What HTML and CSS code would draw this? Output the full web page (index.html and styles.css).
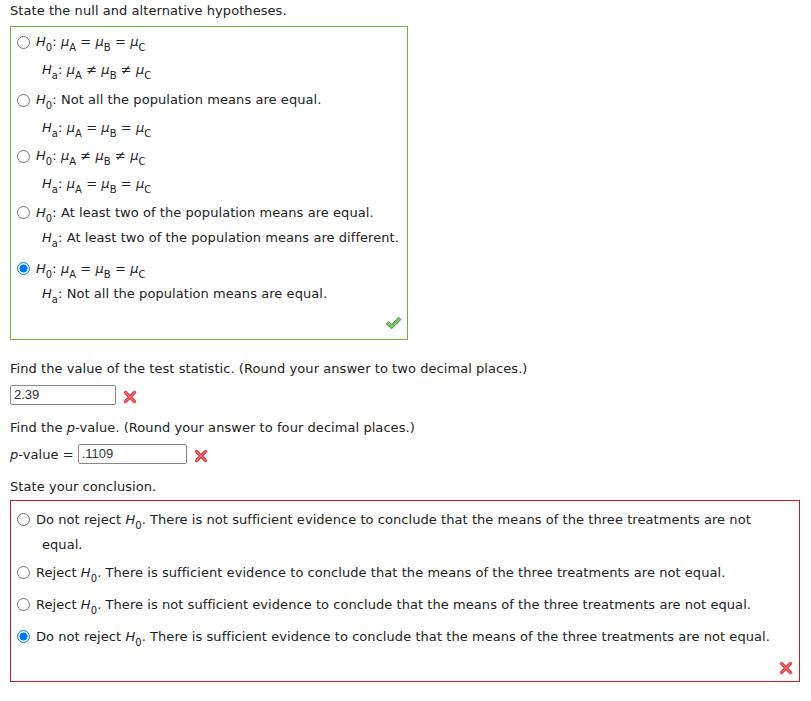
FILE: index.html
```html
<!DOCTYPE html>
<html lang="en">
<head>
<meta charset="utf-8">
<title>Hypotheses</title>
<link rel="stylesheet" href="styles.css">
</head>
<body>
<p class="prompt title">State the null and alternative hypotheses.</p>
<div class="answer-box correct">
  <label class="opt g1 first">
    <input type="radio" name="hyp">
    <span class="lines">
      <span class="line"><i>H</i><sub>0</sub>: <i class="mu">μ</i><sub>A</sub> = <i class="mu">μ</i><sub>B</sub> = <i class="mu">μ</i><sub>C</sub></span>
      <span class="line ha"><i>H</i><sub>a</sub>: <i class="mu">μ</i><sub>A</sub> ≠ <i class="mu">μ</i><sub>B</sub> ≠ <i class="mu">μ</i><sub>C</sub></span>
    </span>
  </label>
  <label class="opt g1">
    <input type="radio" name="hyp">
    <span class="lines">
      <span class="line"><i>H</i><sub>0</sub>: Not all the population means are equal.</span>
      <span class="line ha"><i>H</i><sub>a</sub>: <i class="mu">μ</i><sub>A</sub> = <i class="mu">μ</i><sub>B</sub> = <i class="mu">μ</i><sub>C</sub></span>
    </span>
  </label>
  <label class="opt g1">
    <input type="radio" name="hyp">
    <span class="lines">
      <span class="line"><i>H</i><sub>0</sub>: <i class="mu">μ</i><sub>A</sub> ≠ <i class="mu">μ</i><sub>B</sub> ≠ <i class="mu">μ</i><sub>C</sub></span>
      <span class="line ha"><i>H</i><sub>a</sub>: <i class="mu">μ</i><sub>A</sub> = <i class="mu">μ</i><sub>B</sub> = <i class="mu">μ</i><sub>C</sub></span>
    </span>
  </label>
  <label class="opt g2">
    <input type="radio" name="hyp">
    <span class="lines">
      <span class="line"><i>H</i><sub>0</sub>: At least two of the population means are equal.</span>
      <span class="line ha"><i>H</i><sub>a</sub>: At least two of the population means are different.</span>
    </span>
  </label>
  <label class="opt g3">
    <input type="radio" name="hyp" checked>
    <span class="lines">
      <span class="line"><i>H</i><sub>0</sub>: <i class="mu">μ</i><sub>A</sub> = <i class="mu">μ</i><sub>B</sub> = <i class="mu">μ</i><sub>C</sub></span>
      <span class="line ha"><i>H</i><sub>a</sub>: Not all the population means are equal.</span>
    </span>
  </label>
  <div class="mark-row top-mark">
    <svg class="check" width="17" height="14" viewBox="0 0 17 14" aria-hidden="true">
      <path d="M1.2 7.8 L3.8 5.6 L6.6 8.6 L13.6 1.2 L16 3.4 L6.7 12.8 Z" fill="#7cc26e" stroke="#4f9a46" stroke-width="1" stroke-linejoin="round"/>
    </svg>
  </div>
</div>

<p class="prompt q1">Find the value of the test statistic. (Round your answer to two decimal places.)</p>
<div class="field-row">
  <span class="input-box w1">2.39</span>
  <svg class="xmark" width="14" height="14" viewBox="0 0 14 14" aria-hidden="true">
    <path d="M2.5 2.5 L11.5 11.5 M11.5 2.5 L2.5 11.5" stroke="#e8434a" stroke-width="3.4" stroke-linecap="round"/>
    <path d="M2.5 2.5 L11.5 11.5 M11.5 2.5 L2.5 11.5" stroke="#f47c80" stroke-width="1" stroke-linecap="round"/>
  </svg>
</div>

<p class="prompt q2">Find the <i>p</i>-value. (Round your answer to four decimal places.)</p>
<div class="field-row">
  <span class="field-label"><i>p</i>-value =</span>
  <span class="input-box w2">.1109</span>
  <svg class="xmark" width="14" height="14" viewBox="0 0 14 14" aria-hidden="true">
    <path d="M2.5 2.5 L11.5 11.5 M11.5 2.5 L2.5 11.5" stroke="#e8434a" stroke-width="3.4" stroke-linecap="round"/>
    <path d="M2.5 2.5 L11.5 11.5 M11.5 2.5 L2.5 11.5" stroke="#f47c80" stroke-width="1" stroke-linecap="round"/>
  </svg>
</div>

<p class="prompt q3">State your conclusion.</p>
<div class="answer-box wrong">
  <label class="copt wrap">
    <input type="radio" name="conc">
    <span class="ctext">Do not reject <i>H</i><sub>0</sub>. There is not sufficient evidence to conclude that the means of the three treatments are not equal.</span>
  </label>
  <label class="copt">
    <input type="radio" name="conc">
    <span class="ctext">Reject <i>H</i><sub>0</sub>. There is sufficient evidence to conclude that the means of the three treatments are not equal.</span>
  </label>
  <label class="copt">
    <input type="radio" name="conc">
    <span class="ctext">Reject <i>H</i><sub>0</sub>. There is not sufficient evidence to conclude that the means of the three treatments are not equal.</span>
  </label>
  <label class="copt">
    <input type="radio" name="conc" checked>
    <span class="ctext">Do not reject <i>H</i><sub>0</sub>. There is sufficient evidence to conclude that the means of the three treatments are not equal.</span>
  </label>
  <div class="mark-row bottom">
    <svg class="xmark" width="14" height="14" viewBox="0 0 14 14" aria-hidden="true">
      <path d="M2.5 2.5 L11.5 11.5 M11.5 2.5 L2.5 11.5" stroke="#e8434a" stroke-width="3.4" stroke-linecap="round"/>
      <path d="M2.5 2.5 L11.5 11.5 M11.5 2.5 L2.5 11.5" stroke="#f47c80" stroke-width="1" stroke-linecap="round"/>
    </svg>
  </div>
</div>
</body>
</html>
```

FILE: styles.css
```css
html, body {
  background: #ffffff;
}
body {
  margin: 0;
  padding: 3px 10px 0 10px;
  font-family: "DejaVu Sans", Verdana, sans-serif;
  font-size: 13px;
  letter-spacing: 0.06px;
  color: #222222;
}
.prompt {
  margin: 0;
  line-height: 16px;
}
.title {
  margin-bottom: 7px;
}
.answer-box {
  box-sizing: border-box;
  border: 1px solid #6db33f;
  padding: 1px 0 0 5px;
}
.answer-box.correct {
  width: 398px;
}
.answer-box.wrong {
  border-color: #d21b1b;
  width: 790px;
  padding-top: 2px;
}
sub {
  font-size: 10px;
  vertical-align: -5px;
  line-height: 0;
}
i {
  font-style: italic;
}
.mu {
  font-style: italic;
}
.opt {
  display: flex;
  align-items: flex-start;
}
.opt input, .copt input {
  width: 13px;
  height: 13px;
  margin: 0 6px 0 1px;
  flex: none;
}
.lines {
  display: flex;
  flex-direction: column;
}
.line {
  display: block;
  white-space: nowrap;
}
.line.ha {
  padding-left: 6px;
}
.g1 .line {
  line-height: 28px;
}
.g1 input {
  margin-top: 8px;
}
.g1.first {
  margin-bottom: 2px;
}
.g2 {
  margin-top: 2px;
}
.g2 .line, .g3 .line {
  line-height: 25px;
}
.g2 input, .g3 input {
  margin-top: 6px;
}
.g3 {
  margin-top: 6px;
}
.mark-row {
  display: flex;
  justify-content: flex-end;
}
.top-mark {
  padding: 10px 5px 9px 0;
}
.check {
  display: block;
}
.q1 {
  margin-top: 21px;
}
.field-row {
  display: flex;
  align-items: center;
  gap: 7px;
  margin-top: 8px;
}
.field-label {
  margin-right: -3px;
}
.input-box {
  box-sizing: border-box;
  height: 20px;
  border: 1px solid #8a8a8a;
  border-radius: 2px;
  padding: 0 3px;
  font-family: "Liberation Sans", Arial, sans-serif;
  font-size: 13px;
  letter-spacing: 0;
  line-height: 18px;
  color: #333333;
}
.w1 {
  width: 106px;
}
.w2 {
  width: 109px;
}
.xmark {
  display: block;
  margin-top: 3px;
}
.q2 {
  margin-top: 15px;
}
.q3 {
  margin-top: 15px;
  margin-bottom: 5px;
}
.copt {
  display: flex;
  align-items: flex-start;
  padding: 3.5px 0;
}
.copt.wrap {
  padding-bottom: 0;
}
.copt input {
  margin-top: 6px;
}
.ctext {
  display: block;
  line-height: 25px;
  padding-left: 6px;
  text-indent: -6px;
  max-width: 735px;
}
.mark-row.bottom {
  padding: 5px 6px 6px 0;
}
```
